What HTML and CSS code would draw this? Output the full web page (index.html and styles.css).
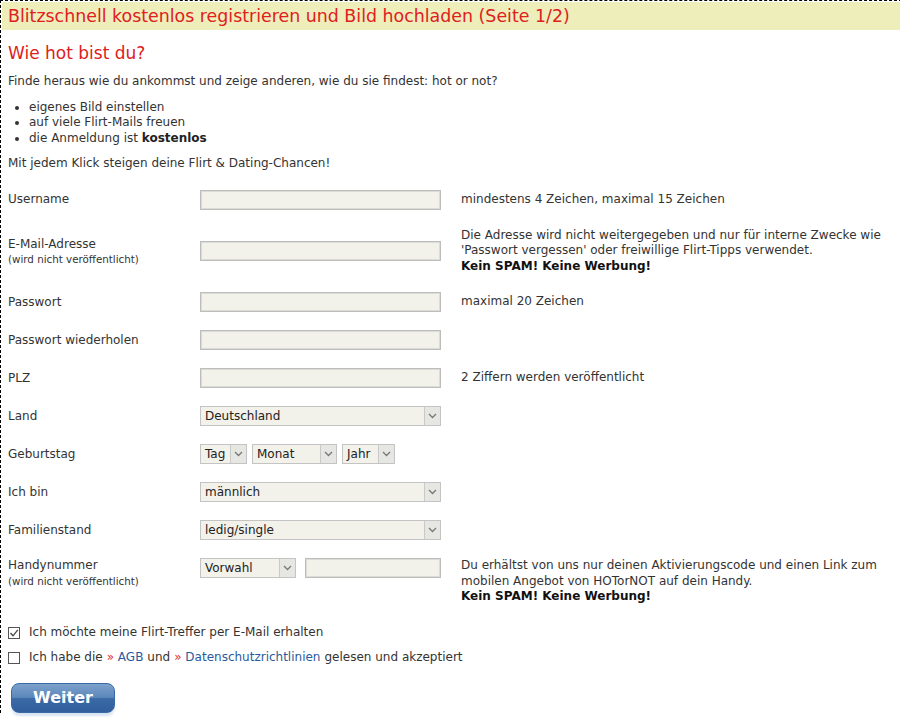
FILE: index.html
```html
<html lang="de">
  <head>
    <meta charset="UTF-8" />
    <title>Registrierung - Seite 1/2</title>
    <link rel="stylesheet" href="styles.css">
  </head>
  <body>
    <div class="page">
      <div class="head">Blitzschnell kostenlos registrieren und Bild hochladen (Seite 1/2)</div>

      <div class="content">
        <h1>Wie hot bist du?</h1>
        <p class="intro">Finde heraus wie du ankommst und zeige anderen, wie du sie findest: hot or not?</p>
        <ul class="perks">
          <li>eigenes Bild einstellen</li>
          <li>auf viele Flirt-Mails freuen</li>
          <li>die Anmeldung ist <strong>kostenlos</strong></li>
        </ul>
        <p class="claim">Mit jedem Klick steigen deine Flirt &amp; Dating-Chancen!</p>

        <div class="form">
          <div class="row">
            <div class="label">Username</div>
            <div class="field"><span class="input"></span></div>
            <div class="hint">mindestens 4 Zeichen, maximal 15 Zeichen</div>
          </div>

          <div class="row">
            <div class="label">E-Mail-Adresse<small>(wird nicht veröffentlicht)</small></div>
            <div class="field"><span class="input"></span></div>
            <div class="hint">
              Die Adresse wird nicht weitergegeben und nur für interne Zwecke wie<br />
              'Passwort vergessen' oder freiwillige Flirt-Tipps verwendet.<br />
              <strong>Kein SPAM! Keine Werbung!</strong>
            </div>
          </div>

          <div class="row">
            <div class="label">Passwort</div>
            <div class="field"><span class="input"></span></div>
            <div class="hint">maximal 20 Zeichen</div>
          </div>

          <div class="row">
            <div class="label">Passwort wiederholen</div>
            <div class="field"><span class="input"></span></div>
            <div class="hint"></div>
          </div>

          <div class="row">
            <div class="label">PLZ</div>
            <div class="field"><span class="input"></span></div>
            <div class="hint">2 Ziffern werden veröffentlicht</div>
          </div>

          <div class="row">
            <div class="label">Land</div>
            <div class="field">
              <span class="select full"><span class="val">Deutschland</span><i class="arrow"><svg width="9" height="6" viewBox="0 0 9 6"><path d="M1 1 L4.5 4.5 L8 1" fill="none" stroke="#777" stroke-width="1.3"/></svg></i></span>
            </div>
            <div class="hint"></div>
          </div>

          <div class="row">
            <div class="label">Geburtstag</div>
            <div class="field split">
              <span class="select day"><span class="val">Tag</span><i class="arrow"><svg width="9" height="6" viewBox="0 0 9 6"><path d="M1 1 L4.5 4.5 L8 1" fill="none" stroke="#777" stroke-width="1.3"/></svg></i></span>
              <span class="select month"><span class="val">Monat</span><i class="arrow"><svg width="9" height="6" viewBox="0 0 9 6"><path d="M1 1 L4.5 4.5 L8 1" fill="none" stroke="#777" stroke-width="1.3"/></svg></i></span>
              <span class="select year"><span class="val">Jahr</span><i class="arrow"><svg width="9" height="6" viewBox="0 0 9 6"><path d="M1 1 L4.5 4.5 L8 1" fill="none" stroke="#777" stroke-width="1.3"/></svg></i></span>
            </div>
            <div class="hint"></div>
          </div>

          <div class="row">
            <div class="label">Ich bin</div>
            <div class="field">
              <span class="select full"><span class="val">männlich</span><i class="arrow"><svg width="9" height="6" viewBox="0 0 9 6"><path d="M1 1 L4.5 4.5 L8 1" fill="none" stroke="#777" stroke-width="1.3"/></svg></i></span>
            </div>
            <div class="hint"></div>
          </div>

          <div class="row">
            <div class="label">Familienstand</div>
            <div class="field">
              <span class="select full"><span class="val">ledig/single</span><i class="arrow"><svg width="9" height="6" viewBox="0 0 9 6"><path d="M1 1 L4.5 4.5 L8 1" fill="none" stroke="#777" stroke-width="1.3"/></svg></i></span>
            </div>
            <div class="hint"></div>
          </div>

          <div class="row top">
            <div class="label">Handynummer<small>(wird nicht veröffentlicht)</small></div>
            <div class="field split phone">
              <span class="select prefix"><span class="val">Vorwahl</span><i class="arrow"><svg width="9" height="6" viewBox="0 0 9 6"><path d="M1 1 L4.5 4.5 L8 1" fill="none" stroke="#777" stroke-width="1.3"/></svg></i></span>
              <span class="input number"></span>
            </div>
            <div class="hint">
              Du erhältst von uns nur deinen Aktivierungscode und einen Link zum<br />
              mobilen Angebot von HOTorNOT auf dein Handy.<br />
              <strong>Kein SPAM! Keine Werbung!</strong>
            </div>
          </div>
        </div>

        <div class="check first">
          <span class="box"><svg width="10" height="10" viewBox="0 0 10 10"><path d="M1.5 5 L4 7.8 L8.8 1.8" fill="none" stroke="#444" stroke-width="1.3"/></svg></span>
          Ich möchte meine Flirt-Treffer per E-Mail erhalten
        </div>
        <div class="check">
          <span class="box"></span>
          Ich habe die <a href="#"><b>»</b> AGB</a> und <a href="#"><b>»</b> Datenschutzrichtlinien</a> gelesen und akzeptiert
        </div>

        <div class="submit">
          <a href="#" class="weiter">Weiter</a>
        </div>
      </div>
    </div>
  </body>
</html>
```

FILE: styles.css
```css
html,
body {
  overflow: hidden;
}

body {
  margin: 0;
  background-color: #fff;
  color: #333;
  font-family: "DejaVu Sans", Verdana, sans-serif;
  font-size: 12px;
  line-height: 15.5px;
}

.page {
  width: 930px;
  border-top: 1px dashed #000;
  border-left: 1px dashed #000;
  padding: 1px 0 0 1px;
}

.head {
  background-color: #eeeebb;
  color: #e02020;
  font-size: 17.4px;
  height: 28px;
  line-height: 28px;
  padding-left: 6px;
}

.content {
  padding: 0 6px;
}

h1 {
  color: #e02020;
  font-size: 17px;
  font-weight: normal;
  line-height: 22px;
  margin: 12px 0 10px;
}

p {
  margin: 0;
}

.perks {
  margin: 10px 0 10px;
  padding-left: 21px;
}

.perks strong {
  color: #222;
}

.form {
  margin-top: 9px;
}

.row {
  display: grid;
  grid-template-columns: 192px 241px 1fr;
  align-items: center;
}

.row > div {
  padding: 9px 0;
}

.row.top {
  align-items: start;
}

.label {
  padding-top: 10px !important;
}

.row.top .label {
  padding-top: 9px !important;
}

.label small {
  display: block;
  font-size: 10.3px;
  line-height: 13px;
  margin-top: 1px;
}

.hint {
  padding-left: 20px !important;
  white-space: nowrap;
}

.hint strong {
  color: #111;
}

.input {
  display: block;
  height: 20px;
  box-sizing: border-box;
  background-color: #f2f1ea;
  border: 1px solid #bdbdbd;
  box-shadow: inset 0 0 0 1px #dcdcd6;
}

.split {
  display: flex;
  gap: 5px;
}

.select {
  display: flex;
  height: 20px;
  box-sizing: border-box;
  background-color: #f2f1ea;
  border: 1px solid #c4c4c4;
  font-size: 12px;
  color: #222;
  line-height: 18px;
}

.select .val {
  flex: 1;
  padding-left: 4px;
  white-space: nowrap;
}

.select .arrow {
  width: 15px;
  background-color: #e6e6e3;
  border-left: 1px solid #c9c9c9;
  display: flex;
  align-items: center;
  justify-content: center;
}

.select.full {
  width: 241px;
}

.select.day {
  width: 47px;
}

.select.month {
  width: 85px;
}

.select.year {
  width: 53px;
}

.select.prefix {
  width: 96px;
}

.phone {
  gap: 9px;
}

.phone .number {
  flex: 1;
}

.check {
  display: flex;
  align-items: center;
  height: 20px;
  margin-top: 5px;
}

.check.first {
  margin-top: 9px;
}

.box {
  width: 12px;
  height: 12px;
  box-sizing: border-box;
  border: 1px solid #555;
  background-color: #fff;
  margin-right: 9px;
  display: flex;
  align-items: center;
  justify-content: center;
}

a {
  color: #2a5a9c;
  text-decoration: none;
  margin: 0 4px;
}

a b {
  color: #e03030;
  font-weight: normal;
}

.submit {
  margin-top: 15px;
  padding-left: 3px;
}

.weiter {
  display: inline-block;
  width: 104px;
  height: 30px;
  margin: 0;
  box-sizing: border-box;
  border-radius: 8px;
  border: 1px solid #3a6aa6;
  background: linear-gradient(#7da2cc 0%, #5c87ba 48%, #3b6aa6 52%, #2e5e9c 100%);
  color: #fff;
  font-size: 16px;
  font-weight: bold;
  line-height: 28px;
  text-align: center;
  box-shadow: 0 4px 3px -1px #d4e2f2;
}
```
